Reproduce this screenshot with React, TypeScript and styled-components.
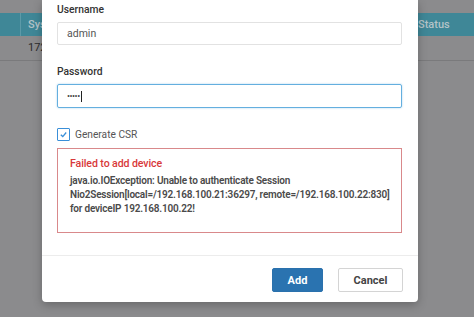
import styled, { createGlobalStyle } from "styled-components";

const Global = createGlobalStyle`
  html, body {
    margin: 0;
    padding: 0;
    width: 474px;
    height: 317px;
    overflow: hidden;
    background: #8b8b8d;
    font-family: Roboto, "Liberation Sans", sans-serif;
  }
`;

const Page = styled.div`
  position: relative;
  width: 474px;
  height: 317px;
  padding-top: 13px;
  box-sizing: border-box;
  background: #8b8b8d;
`;

const Table = styled.div`
  display: grid;
  grid-template-columns: 20px 22px 1fr 61px;
`;

const HeadCell = styled.div<{ first?: boolean; pad?: number }>`
  height: 23px;
  background: #3f8797;
  border-left: ${(p) => (p.first ? "none" : "1px solid #5c9aa8")};
  color: #b3c3c7;
  font-size: 11px;
  font-weight: 500;
  line-height: 23px;
  padding-left: ${(p) => p.pad ?? 7}px;
  white-space: nowrap;
`;

const BodyCell = styled.div`
  height: 24px;
  border-bottom: 1px solid #7a7a7c;
  color: #2c2c2c;
  font-size: 11px;
  line-height: 24px;
  padding-left: 8px;
  white-space: nowrap;
`;

const Modal = styled.div`
  position: absolute;
  left: 42px;
  top: 0;
  width: 376px;
  background: #ffffff;
  border-radius: 0 0 4px 4px;
  box-shadow: 0 3px 10px rgba(0, 0, 0, 0.25);
`;

const Body = styled.div`
  padding: 3px 16px 22px 15px;
  display: flex;
  flex-direction: column;
`;

const Label = styled.div`
  font-size: 10.3px;
  font-weight: 500;
  color: #333;
  line-height: 14px;
  margin-bottom: 5px;
`;

const Field = styled.div<{ focused?: boolean }>`
  height: ${(p) => (p.focused ? "24px" : "23px")};
  box-sizing: border-box;
  border: 1px solid ${(p) => (p.focused ? "#64afdf" : "#e2e2e2")};
  box-shadow: ${(p) => (p.focused ? "0 0 2px rgba(100,175,223,0.6)" : "none")};
  border-radius: 2px;
  padding-left: 9px;
  display: flex;
  align-items: center;
  font-size: 10.5px;
  color: #555;
  margin-bottom: 20px;
`;

const Dots = styled.span`
  font-size: 9px;
  letter-spacing: -0.5px;
  color: #444;
`;

const Caret = styled.span`
  display: inline-block;
  width: 1px;
  height: 11px;
  background: #222;
  margin-left: 1px;
`;

const CheckRow = styled.label`
  display: flex;
  align-items: center;
  gap: 5px;
  height: 14px;
  margin-top: -1px;
  margin-bottom: 7px;
  font-size: 10.2px;
  color: #555;
`;

const Box = styled.span`
  width: 13px;
  height: 13px;
  box-sizing: border-box;
  border: 1px solid #3a8fd8;
  border-radius: 1px;
  display: flex;
  align-items: center;
  justify-content: center;
`;

const ErrorBox = styled.div`
  height: 85px;
  box-sizing: border-box;
  border: 1px solid #d9898b;
  padding: 8px 12px 0 12px;
`;

const ErrorTitle = styled.div`
  color: #d8383a;
  font-size: 10.6px;
  font-weight: 500;
  letter-spacing: -0.1px;
  line-height: 14px;
  margin-bottom: 3px;
`;

const ErrorText = styled.div`
  color: #4a4a4a;
  font-size: 10px;
  font-weight: 600;
  letter-spacing: -0.2px;
  line-height: 14px;
  white-space: nowrap;
`;

const Footer = styled.div`
  border-top: 1px solid #ececec;
  display: flex;
  justify-content: flex-end;
  gap: 15px;
  padding: 12px 15px 10px 15px;
`;

const Button = styled.button<{ primary?: boolean }>`
  height: 24px;
  width: ${(p) => (p.primary ? "51px" : "65px")};
  box-sizing: border-box;
  border-radius: 2px;
  border: 1px solid ${(p) => (p.primary ? "#2a71ad" : "#d4d4d4")};
  background: ${(p) => (p.primary ? "#2a73b0" : "#ffffff")};
  color: ${(p) => (p.primary ? "#ffffff" : "#444")};
  font-family: Roboto, "Liberation Sans", sans-serif;
  font-size: 11px;
  font-weight: 700;
  padding: 0;
  cursor: pointer;
`;

export default function App() {
  return (
    <>
      <Global />
      <Page>
        <Table>
          <HeadCell first />
          <HeadCell>Sys</HeadCell>
          <HeadCell first />
          <HeadCell first pad={5}>Status</HeadCell>
          <BodyCell />
          <BodyCell>172</BodyCell>
          <BodyCell />
          <BodyCell />
        </Table>

        <Modal>
          <Body>
            <Label>Username</Label>
            <Field>admin</Field>
            <Label>Password</Label>
            <Field focused>
              <Dots>•••••</Dots>
              <Caret />
            </Field>
            <CheckRow>
              <Box>
                <svg width="9" height="9" viewBox="0 0 10 10">
                  <path d="M2 5.2 L4.2 7.3 L8 2.8" fill="none" stroke="#3a8fd8" strokeWidth="1.5" />
                </svg>
              </Box>
              Generate CSR
            </CheckRow>
            <ErrorBox>
              <ErrorTitle>Failed to add device</ErrorTitle>
              <ErrorText>
                java.io.IOException: Unable to authenticate Session
                <br />
                Nio2Session[local=/192.168.100.21:36297, remote=/192.168.100.22:830]
                <br />
                for deviceIP 192.168.100.22!
              </ErrorText>
            </ErrorBox>
          </Body>
          <Footer>
            <Button primary>Add</Button>
            <Button>Cancel</Button>
          </Footer>
        </Modal>
      </Page>
    </>
  );
}
